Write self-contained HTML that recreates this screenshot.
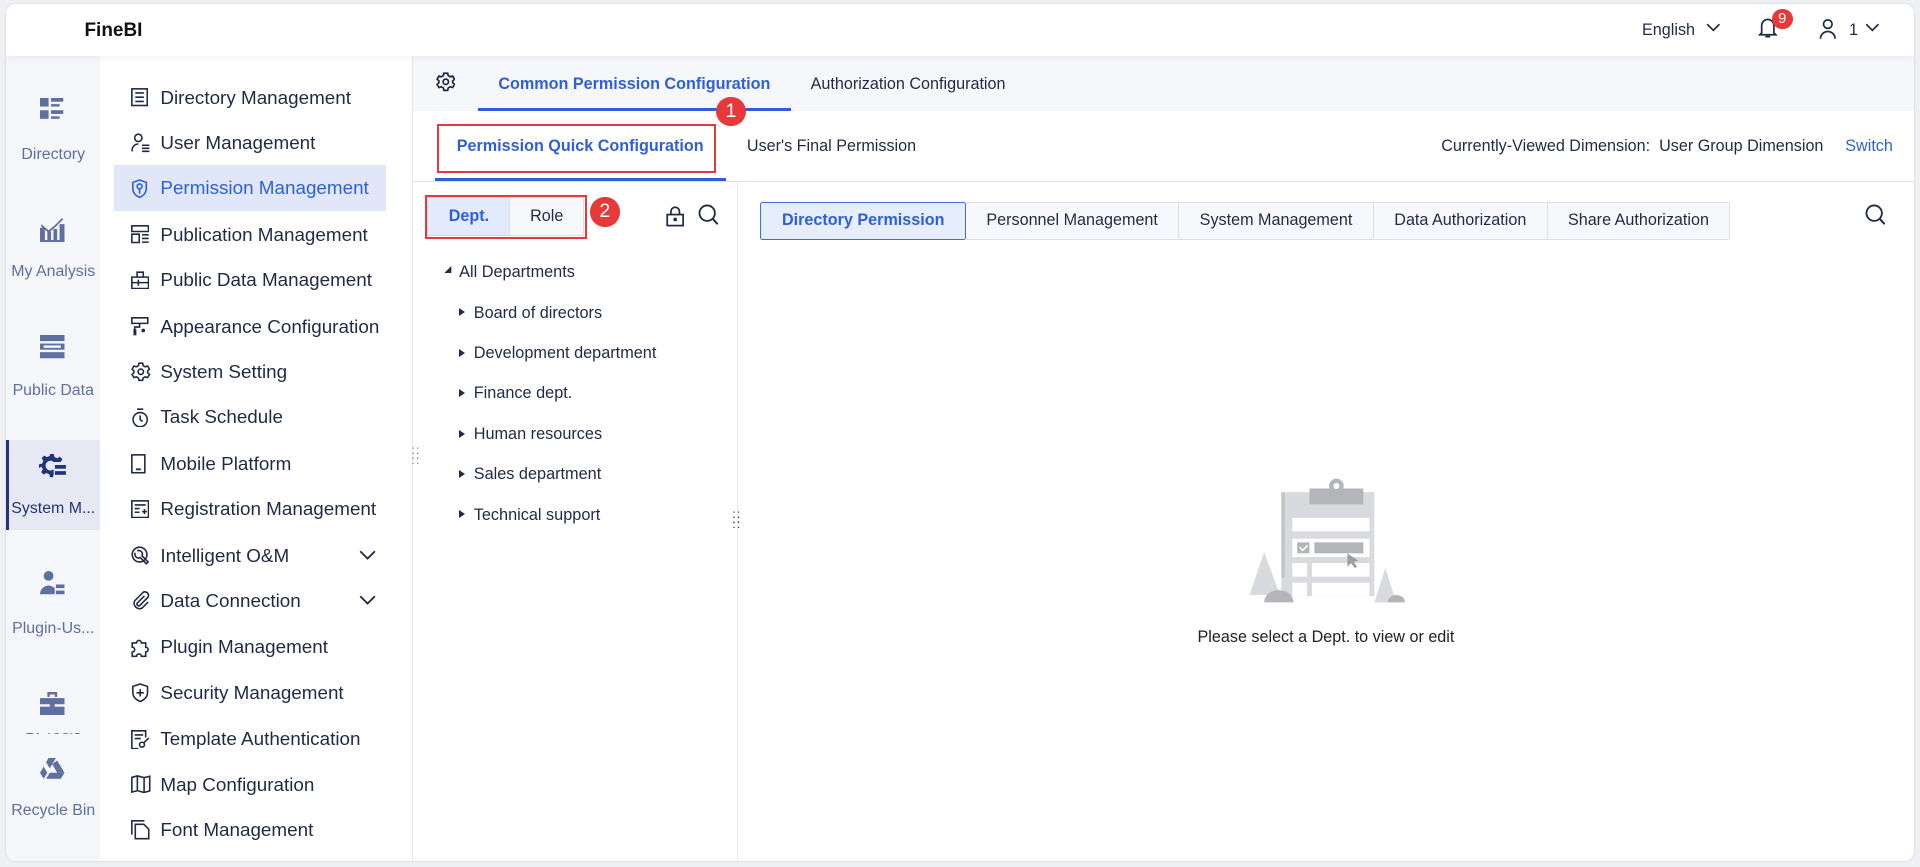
<!DOCTYPE html>
<html><head><meta charset="utf-8"><style>
*{box-sizing:border-box;margin:0;padding:0}
html,body{width:1920px;height:867px;overflow:hidden;background:#eef0f3}
#z{zoom:1.2244898;width:1568px;height:708px;position:relative;font-family:"Liberation Sans",sans-serif;color:#1f2a44}
.a{position:absolute;white-space:nowrap}
.card{position:absolute;left:5px;top:3px;width:1558px;height:700px;background:#fff;border-radius:8px;overflow:hidden;box-shadow:0 0 2px rgba(0,0,0,.15)}
.hdr{position:absolute;left:0;top:0;width:1558px;height:43px;background:#fff;box-shadow:0 2px 6px rgba(0,0,0,.06);z-index:2}
.rail{position:absolute;left:0;top:43px;width:77px;height:657px;background:#f5f6fa}
.ri{position:absolute;left:0;width:77px;text-align:center;font-size:13px;color:#5f6f9f;white-space:nowrap}
.nav{position:absolute;left:77px;top:43px;width:255px;height:657px;background:#fff;border-right:1px solid #e6e8ee}
.ni{position:absolute;left:11px;width:222px;height:37px;font-size:15.4px;line-height:37px;padding-left:38px;white-space:nowrap}
.ni svg{position:absolute;left:14px;top:11px}
.tree{font-size:13.3px;position:absolute;white-space:nowrap}
.tri{display:inline-block;width:0;height:0;border-top:4px solid transparent;border-bottom:4px solid transparent;border-left:5px solid #1f2a44;margin-right:7px;vertical-align:1px}
.seg{position:absolute;top:162px;height:31px;line-height:29px;font-size:13.2px;text-align:center;background:#f7f8fb;border:1px solid #dcdfe6;border-left:none;color:#1f2a44;white-space:nowrap}
.badge{position:absolute;width:24px;height:24px;border-radius:12px;background:#e8393a;color:#fff;font-size:16px;text-align:center;line-height:24px}
.t{font-size:13.2px}
</style></head><body><div id="z">
<div class="card">
 <div class="hdr">
  <div class="a" style="left:64px;top:13px;font-size:15.5px;font-weight:bold;color:#111">FineBI</div>
  <div class="a t" style="left:1336px;top:14px">English</div>
  <svg class="a" style="left:1388px;top:16px" width="12" height="8" viewBox="0 0 12 8"><path d="M1 1l5 5 5-5" fill="none" stroke="#1f2a44" stroke-width="1.4"/></svg>
  <svg class="a" style="left:1431px;top:11px" width="16" height="18" viewBox="0 0 16 18"><path d="M3 13V7a5 5 0 0110 0v6l1.5 1.5h-13zM6 16h4" fill="none" stroke="#1f2a44" stroke-width="1.4"/></svg>
  <div class="a" style="left:1442px;top:4px;width:17px;height:17px;border-radius:9px;background:#e8393a;color:#fff;font-size:12px;text-align:center;line-height:17px">9</div>
  <svg class="a" style="left:1480px;top:12px" width="16" height="18" viewBox="0 0 16 18"><circle cx="8" cy="5" r="3.5" fill="none" stroke="#1f2a44" stroke-width="1.4"/><path d="M2 17a6 6 0 0112 0" fill="none" stroke="#1f2a44" stroke-width="1.4"/></svg>
  <div class="a t" style="left:1505px;top:14px">1</div>
  <svg class="a" style="left:1518px;top:16px" width="12" height="8" viewBox="0 0 12 8"><path d="M1 1l5 5 5-5" fill="none" stroke="#1f2a44" stroke-width="1.4"/></svg>
 </div>
 <div class="rail">
  <svg class="a" style="left:28px;top:34px" width="20" height="18" viewBox="0 0 20 18"><g fill="#5f6f9f"><rect x="0" y="0" width="7" height="7"/><rect x="9" y="0" width="10" height="3"/><rect x="9" y="5" width="7" height="2"/><rect x="0" y="10" width="7" height="7"/><rect x="9" y="10" width="10" height="3"/><rect x="9" y="15" width="7" height="2"/></g></svg>
  <div class="ri" style="top:73px">Directory</div>
  <svg class="a" style="left:28px;top:132px" width="20" height="20" viewBox="0 0 20 20"><g fill="#5f6f9f"><rect x="0" y="8" width="4" height="10"/><rect x="6" y="11" width="3" height="7"/><rect x="11" y="9" width="3" height="9"/><rect x="16" y="5" width="4" height="13"/><rect x="0" y="18" width="20" height="2"/><path d="M1 5l6 5 5-4 6-6 1 1-7 7-5 4-6-5z"/></g></svg>
  <div class="ri" style="top:169px">My Analysis</div>
  <svg class="a" style="left:28px;top:228px" width="20" height="20" viewBox="0 0 20 20"><g fill="#5f6f9f"><rect x="0" y="0" width="20" height="5"/><rect x="0" y="7" width="20" height="5"/><rect x="0" y="14" width="20" height="5"/></g><rect x="3" y="8.5" width="14" height="2" fill="#f5f6fa"/></svg>
  <div class="ri" style="top:266px">Public Data</div>
  <div class="a" style="left:0;top:313px;width:77px;height:74px;background:#e6e9f3;border-left:3px solid #22337a"></div>
  <svg class="a" style="left:27px;top:325px" width="22" height="20" viewBox="0 0 22 20"><g fill="#22337a"><path d="M9 0h3l.6 2.5 2.2 1 2.3-1.3 2 2-1.3 2.3H12a4 4 0 100 6v4l-.6 2.5H9l-.6-2.5-2.3-1-2.3 1.3-2-2 1.3-2.3-1-2.2L0 11.5v-3l2.5-.6 1-2.3L2.2 3.3l2-2 2.3 1.3 2.2-1z"/><rect x="13" y="9" width="9" height="3"/><rect x="13" y="14" width="9" height="3"/></g></svg>
  <div class="ri" style="top:362px;color:#22337a">System M...</div>
  <svg class="a" style="left:28px;top:420px" width="20" height="20" viewBox="0 0 20 20"><g fill="#5f6f9f"><circle cx="7" cy="4" r="4"/><path d="M0 19a7 7 0 0112-5v5z"/><rect x="13" y="11" width="7" height="3"/><rect x="13" y="16" width="7" height="3"/></g></svg>
  <div class="ri" style="top:460px">Plugin-Us...</div>
  <svg class="a" style="left:28px;top:519px" width="20" height="19" viewBox="0 0 20 19"><g fill="#5f6f9f"><path d="M6 0h8v4h-2V2H8v2H6z"/><rect x="0" y="5" width="20" height="5"/><rect x="0" y="12" width="20" height="7"/><rect x="8" y="9" width="4" height="5"/></g></svg>
  <div class="ri" style="top:553px;height:4px;overflow:hidden"><div style="margin-top:-10px">BI Tools</div></div>
  <svg class="a" style="left:28px;top:573px" width="20" height="18" viewBox="0 0 20 18"><g fill="#5f6f9f"><path d="M7 0h6l-5 8.5-3-5z"/><path d="M14 2l6 10h-6L10 5z"/><path d="M0 12l3-5 3 5 -3 5zM5 17l3-5h12l-3 5z"/></g></svg>
  <div class="ri" style="top:609px">Recycle Bin</div>
 </div>
 <div class="nav">
  <div class="ni" style="top:15px"><svg width="14" height="15" viewBox="0 0 14 15"><rect x=".7" y=".7" width="12.6" height="13.6" fill="none" stroke="#1f2a44" stroke-width="1.3"/><path d="M3.5 4h7M3.5 7.5h7M3.5 11h7" stroke="#1f2a44" stroke-width="1.3"/></svg>Directory Management</div>
  <div class="ni" style="top:52px"><svg width="16" height="16" viewBox="0 0 16 16"><circle cx="6" cy="4" r="3" fill="none" stroke="#1f2a44" stroke-width="1.3"/><path d="M1 15a5 5 0 015-6M9 10h6M9 12.5h6M9 15h6" fill="none" stroke="#1f2a44" stroke-width="1.3"/></svg>User Management</div>
  <div class="ni" style="top:89px;background:#e1e7f8;color:#2f5fd8"><svg width="14" height="16" viewBox="0 0 14 16"><path d="M7 .8l5.5 2v5c0 3.5-2.5 6-5.5 7.2C4 13.8 1.5 11.3 1.5 7.8v-5z" fill="none" stroke="#2f5fd8" stroke-width="1.3"/><circle cx="7" cy="6" r="2" fill="none" stroke="#2f5fd8" stroke-width="1.3"/><path d="M7 8v4" stroke="#2f5fd8" stroke-width="1.3"/></svg>Permission Management</div>
  <div class="ni" style="top:127px"><svg width="15" height="15" viewBox="0 0 15 15"><path d="M.7.7h13.6v4.6H.7zM.7 7.5h6v6.8h-6zM9 8h5.5M9 11h5.5M9 14h5.5" fill="none" stroke="#1f2a44" stroke-width="1.3"/></svg>Publication Management</div>
  <div class="ni" style="top:164px"><svg width="15" height="15" viewBox="0 0 15 15"><path d="M.7 5h13.6v9.3H.7zM5 5V1h5v4M.7 9.5h13.6M6 7v5" fill="none" stroke="#1f2a44" stroke-width="1.3"/></svg>Public Data Management</div>
  <div class="ni" style="top:202px"><svg width="15" height="16" viewBox="0 0 15 16"><path d="M.7.7h13v4.5H.7zM7 5.2v3H3v3" fill="none" stroke="#1f2a44" stroke-width="1.3"/><rect x="2" y="10" width="2.4" height="5" fill="#1f2a44"/><circle cx="10" cy="11" r="1.5" fill="#1f2a44"/></svg>Appearance Configuration</div>
  <div class="ni" style="top:239px"><svg width="16" height="16" viewBox="0 0 16 16"><path d="M6.5 1h3l.5 2 1.6.9 2-.6 1.5 2.6-1.5 1.4v1.4l1.5 1.4-1.5 2.6-2-.6-1.6.9-.5 2h-3l-.5-2-1.6-.9-2 .6L.9 10.1l1.5-1.4V7.3L.9 5.9l1.5-2.6 2 .6L6 3z" fill="none" stroke="#1f2a44" stroke-width="1.3"/><circle cx="8" cy="8" r="2.2" fill="none" stroke="#1f2a44" stroke-width="1.3"/></svg>System Setting</div>
  <div class="ni" style="top:276px"><svg width="15" height="16" viewBox="0 0 15 16"><circle cx="7.5" cy="9.5" r="5.8" fill="none" stroke="#1f2a44" stroke-width="1.3"/><path d="M5 1h5M7.5 6v3.5l2 1.5" fill="none" stroke="#1f2a44" stroke-width="1.3"/></svg>Task Schedule</div>
  <div class="ni" style="top:314px"><svg width="12" height="16" viewBox="0 0 12 16"><rect x=".7" y=".7" width="10.6" height="14.6" fill="none" stroke="#1f2a44" stroke-width="1.3"/><path d="M4 12.5h4" stroke="#1f2a44" stroke-width="1.5"/></svg>Mobile Platform</div>
  <div class="ni" style="top:351px"><svg width="15" height="15" viewBox="0 0 15 15"><rect x=".7" y=".7" width="13.6" height="13.6" fill="none" stroke="#1f2a44" stroke-width="1.3"/><path d="M3 4h9M3 7h4M3 10h4M9 9.5h4M11 7.5v4" stroke="#1f2a44" stroke-width="1.3"/></svg>Registration Management</div>
  <div class="ni" style="top:389px"><svg width="16" height="16" viewBox="0 0 16 16"><circle cx="7" cy="7" r="6" fill="none" stroke="#1f2a44" stroke-width="1.3"/><path d="M5 4a3 3 0 014 4l5 5-1.5 1.5-5-5a3 3 0 01-4-4" fill="none" stroke="#1f2a44" stroke-width="1.3"/></svg>Intelligent O&amp;M<svg style="left:200px;top:14px" width="14" height="9" viewBox="0 0 14 9"><path d="M1 1l6 6 6-6" fill="none" stroke="#1f2a44" stroke-width="1.5"/></svg></div>
  <div class="ni" style="top:426px"><svg width="16" height="16" viewBox="0 0 16 16"><path d="M11 4l-6 6a1.5 1.5 0 002 2l7-7a3 3 0 00-4-4L3 8a4.5 4.5 0 006 6l5-5" fill="none" stroke="#1f2a44" stroke-width="1.3"/></svg>Data Connection<svg style="left:200px;top:14px" width="14" height="9" viewBox="0 0 14 9"><path d="M1 1l6 6 6-6" fill="none" stroke="#1f2a44" stroke-width="1.5"/></svg></div>
  <div class="ni" style="top:464px"><svg width="16" height="16" viewBox="0 0 16 16"><path d="M1 4h3.5a2 2 0 114 0H12v3.5a2 2 0 110 4V15H8.5a2 2 0 10-4 0H1v-3.5a2 2 0 100-4z" fill="none" stroke="#1f2a44" stroke-width="1.3"/></svg>Plugin Management</div>
  <div class="ni" style="top:501px"><svg width="15" height="16" viewBox="0 0 15 16"><path d="M7.5.8l6 2v5c0 3.5-2.7 6-6 7.3-3.3-1.3-6-3.8-6-7.3v-5z" fill="none" stroke="#1f2a44" stroke-width="1.3"/><path d="M7.5 5v6M4.5 8h6" stroke="#1f2a44" stroke-width="1.3"/></svg>Security Management</div>
  <div class="ni" style="top:539px"><svg width="16" height="16" viewBox="0 0 16 16"><path d="M12 6V.7H.7v14.6H6M3 4h7M3 7h5" fill="none" stroke="#1f2a44" stroke-width="1.3"/><circle cx="9" cy="12" r="2" fill="none" stroke="#1f2a44" stroke-width="1.3"/><path d="M10.5 10.5l4-4" stroke="#1f2a44" stroke-width="1.3"/></svg>Template Authentication</div>
  <div class="ni" style="top:576px"><svg width="16" height="15" viewBox="0 0 16 15"><path d="M.7 2l4.5-1.3 5.5 1.5L15.3 1v12l-4.6 1.3-5.5-1.5L.7 14zM5.2.7v12.1M10.7 2.2v12.1" fill="none" stroke="#1f2a44" stroke-width="1.3"/></svg>Map Configuration</div>
  <div class="ni" style="top:613px"><svg width="16" height="16" viewBox="0 0 16 16"><path d="M.7 12V.7H11M3.5 3.5h7l4 4v7.8h-11z" fill="none" stroke="#1f2a44" stroke-width="1.3"/></svg>Font Management</div>
 </div>
 <!-- main -->
 <div class="a" style="left:332px;top:43px;width:1226px;height:45px;background:#f6f7fa"></div>
 <svg class="a" style="left:351px;top:56px" width="16" height="16" viewBox="0 0 16 16"><path d="M6.5 1h3l.5 2 1.6.9 2-.6 1.5 2.6-1.5 1.4v1.4l1.5 1.4-1.5 2.6-2-.6-1.6.9-.5 2h-3l-.5-2-1.6-.9-2 .6L.9 10.1l1.5-1.4V7.3L.9 5.9l1.5-2.6 2 .6L6 3z" fill="none" stroke="#1f2a44" stroke-width="1.4"/><circle cx="8" cy="8" r="2.2" fill="none" stroke="#1f2a44" stroke-width="1.4"/></svg>
 <div class="a t" style="left:402px;top:58px;font-weight:bold;color:#2f5fd8">Common Permission Configuration</div>
 <div class="a" style="left:385px;top:85px;width:256px;height:3px;background:#2f5fd8"></div>
 <div class="a t" style="left:657px;top:58px">Authorization Configuration</div>
 <div class="a t" style="left:368px;top:109px;font-weight:bold;color:#2f5fd8">Permission Quick Configuration</div>
 <div class="a" style="left:352px;top:98px;width:228px;height:40px;border:2px solid #e8393a"></div>
 <div class="a" style="left:350px;top:142px;width:238px;height:3px;background:#2f5fd8"></div>
 <div class="a" style="left:332px;top:145px;width:1226px;height:1px;background:#dfe2e8"></div>
 <div class="a t" style="left:605px;top:109px">User's Final Permission</div>
 <div class="a t" style="left:1172px;top:109px">Currently-Viewed Dimension:&nbsp; User Group Dimension</div>
 <div class="a t" style="left:1502px;top:109px;color:#2f5fd8">Switch</div>
 <div class="badge" style="left:580px;top:76px">1</div>
 <div class="a" style="left:597px;top:146px;width:1px;height:554px;background:#e6e8ee"></div>
 <!-- dept/role -->
 <div class="a t" style="left:344px;top:158px;width:68px;height:32px;background:#e2eafb;border:1px solid #c9d5f2;color:#2f5fd8;font-weight:bold;text-align:center;line-height:30px">Dept.</div>
 <div class="a t" style="left:411px;top:158px;width:61px;height:32px;background:#f7f8fb;border:1px solid #dcdfe6;text-align:center;line-height:30px">Role</div>
 <div class="a" style="left:342px;top:156px;width:132px;height:36px;border:2px solid #e8393a"></div>
 <div class="badge" style="left:477px;top:158px">2</div>
 <svg class="a" style="left:539px;top:165px" width="15" height="17" viewBox="0 0 15 17"><path d="M4 7V4.5a3.5 3.5 0 017 0V7" fill="none" stroke="#1f2a44" stroke-width="1.4"/><rect x="1" y="7" width="13" height="9" fill="none" stroke="#1f2a44" stroke-width="1.4"/><circle cx="7.5" cy="11" r="1.5" fill="#1f2a44"/></svg>
 <svg class="a" style="left:565px;top:164px" width="17" height="18" viewBox="0 0 17 18"><circle cx="7.5" cy="7.5" r="6.3" fill="none" stroke="#1f2a44" stroke-width="1.5"/><path d="M12 12l4 4.5" stroke="#1f2a44" stroke-width="1.6"/></svg>
 <svg class="a" style="left:358px;top:214px" width="6" height="6" viewBox="0 0 6 6"><path d="M6 0V6H0z" fill="#1f2a44"/></svg>
 <div class="tree" style="left:370px;top:212px">All Departments</div>
 <div class="tree" style="left:370px;top:245px"><span class="tri"></span>Board of directors</div>
 <div class="tree" style="left:370px;top:278px"><span class="tri"></span>Development department</div>
 <div class="tree" style="left:370px;top:311px"><span class="tri"></span>Finance dept.</div>
 <div class="tree" style="left:370px;top:344px"><span class="tri"></span>Human resources</div>
 <div class="tree" style="left:370px;top:377px"><span class="tri"></span>Sales department</div>
 <div class="tree" style="left:370px;top:410px"><span class="tri"></span>Technical support</div>
 <div class="a" style="left:331px;top:363px;font-size:10px;line-height:4px;color:#7a849a;letter-spacing:1px">::<br>::<br>::</div>
 <div class="a" style="left:593px;top:415px;font-size:10px;line-height:4px;color:#333;letter-spacing:1px">::<br>::<br>::</div>
 <!-- right tabs -->
 <div class="seg" style="left:616px;width:168px;border:1px solid #3b6fe0;background:#e6eefc;color:#2f5fd8;font-weight:bold;border-radius:2px">Directory Permission</div>
 <div class="seg" style="left:784px;width:174px">Personnel Management</div>
 <div class="seg" style="left:958px;width:159px">System Management</div>
 <div class="seg" style="left:1117px;width:142px">Data Authorization</div>
 <div class="seg" style="left:1259px;width:149px;border-radius:0 2px 2px 0">Share Authorization</div>
 <svg class="a" style="left:1518px;top:164px" width="17" height="18" viewBox="0 0 17 18"><circle cx="7.5" cy="7.5" r="6.3" fill="none" stroke="#1f2a44" stroke-width="1.5"/><path d="M12 12l4 4.5" stroke="#1f2a44" stroke-width="1.6"/></svg>
 <!-- illustration -->
 <svg class="a" style="left:1013px;top:385px" width="130" height="108" viewBox="0 0 130 108">
  <polygon points="2,98 14,63 27,98" fill="#d9dadd"/>
  <rect x="28" y="14" width="76" height="85" fill="#d9dadd"/>
  <rect x="28" y="14" width="3" height="70" fill="#c4c5c8"/>
  <rect x="51" y="11" width="44" height="13" fill="#b4b5b8"/>
  <circle cx="73" cy="9" r="6" fill="#b4b5b8"/><circle cx="73" cy="9" r="2.5" fill="#fff"/>
  <rect x="37" y="35" width="63" height="11" fill="#fff"/>
  <rect x="37" y="52" width="63" height="15" fill="#fff"/>
  <rect x="41" y="55" width="10" height="9" fill="#b4b5b8"/>
  <path d="M43 59l2.5 2.5 4-4" fill="none" stroke="#fff" stroke-width="1.3"/>
  <rect x="55" y="55" width="40" height="9" fill="#b4b5b8"/>
  <rect x="37" y="72" width="12" height="11" fill="#fff"/><rect x="53" y="72" width="47" height="11" fill="#fff"/>
  <rect x="37" y="88" width="12" height="11" fill="#fff"/><rect x="53" y="88" width="47" height="11" fill="#fff"/>
  <path d="M82 64l0 11 3-3 3 4 2-1-3-4 4-1z" fill="#9c9da1"/>
  <path d="M14 104a12 10 0 0124 0z" fill="#b4b5b8"/>
  <polygon points="104,104 113,76 122,104" fill="#d9dadd"/>
  <path d="M115 104a7 6 0 0114 0z" fill="#b4b5b8"/>
 </svg>
 <div class="a t" style="left:973px;top:510px;color:#222">Please select a Dept. to view or edit</div>
</div>
</div></body></html>
